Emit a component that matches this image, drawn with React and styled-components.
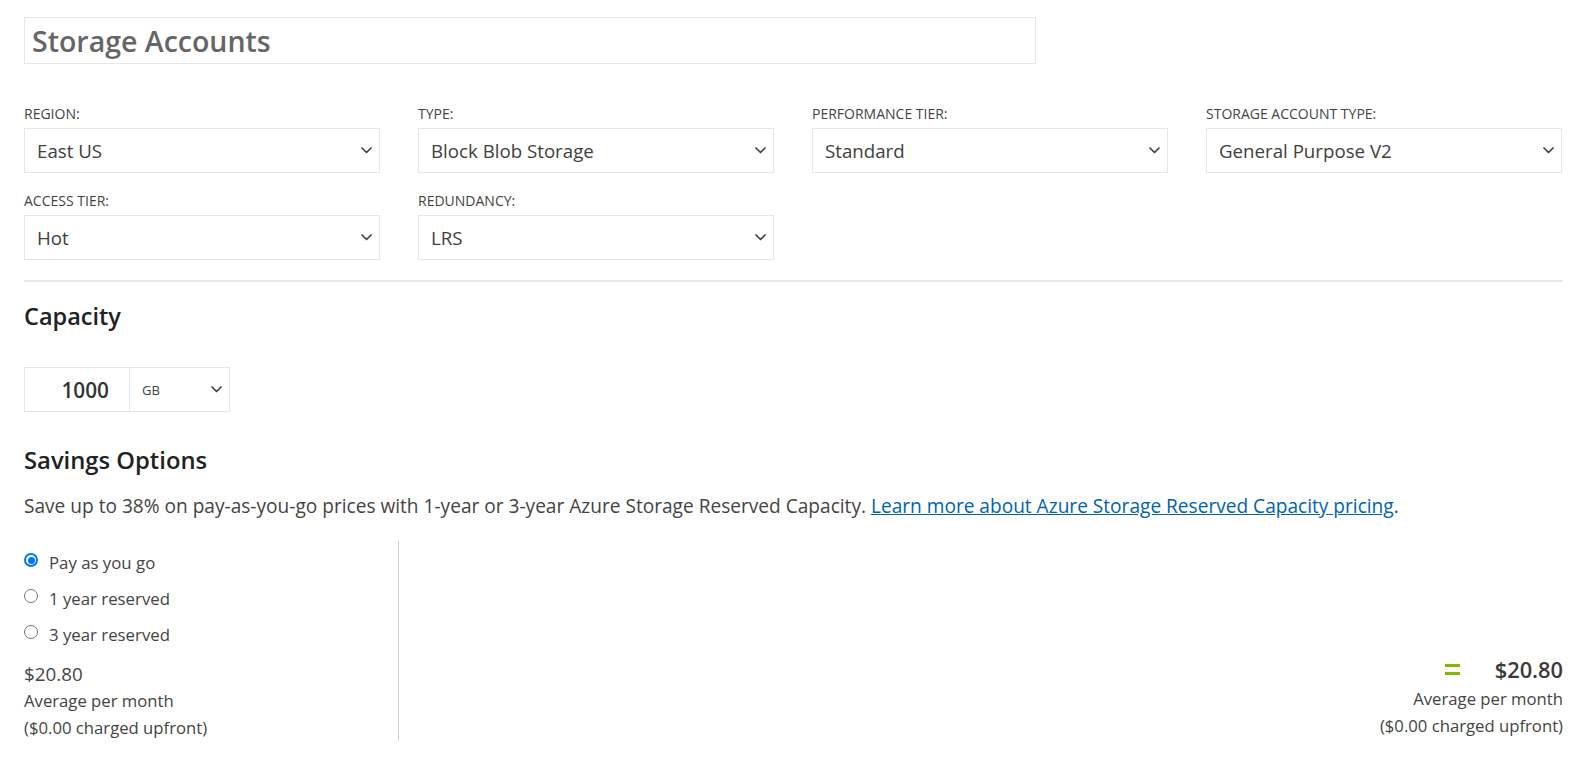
import React from "react";
import styled, { createGlobalStyle } from "styled-components";

const Global = createGlobalStyle`
  html, body { margin: 0; padding: 0; background: #fff; }
  body { font-family: "Open Sans", "Noto Sans", "Liberation Sans", sans-serif; color: #333; }
  * { box-sizing: border-box; }
`;

const Page = styled.div`
  padding: 17px 26px 0 24px;
`;

const TitleBox = styled.div`
  width: 1012px;
  height: 47px;
  border: 1px solid #e6e6e6;
  display: flex;
  align-items: center;
  padding-left: 7px;
  font-size: 28.5px;
  font-weight: 600;
  color: #666;
`;

const Grid = styled.div`
  display: grid;
  grid-template-columns: repeat(4, 356px);
  column-gap: 38px;
  row-gap: 18px;
  margin-top: 40px;
`;

const Field = styled.div`
  display: flex;
  flex-direction: column;
`;

const Label = styled.div`
  font-size: 14px;
  color: #444;
  height: 20px;
  line-height: 20px;
  margin-bottom: 4px;
`;

const SelectBox = styled.div`
  height: 45px;
  width: ${p => (p.$w ? p.$w + "px" : "auto")};
  border: 1px solid #e6e6e6;
  display: flex;
  align-items: center;
  justify-content: space-between;
  padding: 0 7px 0 12px;
  font-size: ${p => p.$fs || 18.7}px;
  color: #404040;
`;

const Chevron = () => (
  <svg width="11" height="7" viewBox="0 0 11 7" fill="none">
    <path d="M1 1 L5.5 5.5 L10 1" stroke="#444" strokeWidth="1.7" strokeLinecap="round" strokeLinejoin="round" />
  </svg>
);

const Divider = styled.div`
  height: 2px;
  background: #e8e8e8;
  margin-top: 20px;
`;

const Heading = styled.h2`
  margin: ${p => p.$mt || 0}px 0 0;
  font-size: ${p => p.$fs || 23.5}px;
  font-weight: 600;
  color: #222;
  line-height: ${p => p.$lh || 30}px;
`;

const CapacityRow = styled.div`
  display: flex;
  margin-top: 36px;
`;

const NumInput = styled.div`
  width: 105px;
  height: 45px;
  border: 1px solid #e6e6e6;
  border-right: none;
  display: flex;
  align-items: center;
  justify-content: flex-end;
  padding-right: 20px;
  font-size: 20.8px;
  font-weight: 600;
  color: #333;
`;

const Para = styled.p`
  margin: 17px 0 0;
  font-size: 19.1px;
  color: #444;
  line-height: 26px;
`;

const Link = styled.a`
  color: #0063b1;
  text-decoration: underline;
`;

const Savings = styled.div`
  display: flex;
  margin-top: 22px;
`;

const LeftCol = styled.div`
  width: 375px;
  border-right: 1px solid #cfcfcf;
  padding-top: 3px;
`;

const RadioRow = styled.label`
  display: flex;
  align-items: center;
  gap: 11px;
  height: 36px;
  font-size: 16.8px;
  color: #444;
`;

const Radio = styled.span`
  width: 14px;
  height: 14px;
  flex: none;
  border-radius: 50%;
  border: ${p => (p.$checked ? "2px solid #0075ff" : "1px solid #767676")};
  display: flex;
  align-items: center;
  justify-content: center;
  margin-top: -4px;
  &::after {
    content: "";
    display: ${p => (p.$checked ? "block" : "none")};
    width: 7px;
    height: 7px;
    border-radius: 50%;
    background: #0075ff;
  }
`;

const Price = styled.div`
  font-size: 18.8px;
  color: #444;
  margin-top: 9px;
  line-height: 26px;
`;

const Small = styled.div`
  font-size: 16.7px;
  color: #444;
  line-height: 27px;
  text-align: ${p => p.$align || "left"};
`;

const RightCol = styled.div`
  flex: 1;
  display: flex;
  flex-direction: column;
  align-items: flex-end;
  justify-content: flex-end;
  padding-bottom: 2px;
`;

const Total = styled.div`
  display: flex;
  align-items: center;
  gap: 35px;
  font-size: 21.8px;
  font-weight: 600;
  color: #3a3a3a;
  line-height: 31px;
`;

const Eq = styled.span`
  width: 15px;
  height: 11px;
  border-top: 3.5px solid #7fba00;
  border-bottom: 3.5px solid #7fba00;
  margin-top: -1px;
`;

const fields = [
  ["REGION:", "East US"],
  ["TYPE:", "Block Blob Storage"],
  ["PERFORMANCE TIER:", "Standard"],
  ["STORAGE ACCOUNT TYPE:", "General Purpose V2"],
  ["ACCESS TIER:", "Hot"],
  ["REDUNDANCY:", "LRS"],
];

export default function App() {
  return (
    <>
      <Global />
      <Page>
        <TitleBox>Storage Accounts</TitleBox>
        <Grid>
          {fields.map(([l, v]) => (
            <Field key={l}>
              <Label>{l}</Label>
              <SelectBox>
                <span>{v}</span>
                <Chevron />
              </SelectBox>
            </Field>
          ))}
        </Grid>
        <Divider />
        <Heading $mt={19}>Capacity</Heading>
        <CapacityRow>
          <NumInput>1000</NumInput>
          <SelectBox $w={101} $fs={13}>
            <span>GB</span>
            <Chevron />
          </SelectBox>
        </CapacityRow>
        <Heading $mt={32} $fs={23.8} $lh={32}>Savings Options</Heading>
        <Para>
          Save up to 38% on pay-as-you-go prices with 1-year or 3-year Azure Storage Reserved Capacity.{" "}
          <Link href="#">Learn more about Azure Storage Reserved Capacity pricing</Link>.
        </Para>
        <Savings>
          <LeftCol>
            <RadioRow><Radio $checked />Pay as you go</RadioRow>
            <RadioRow><Radio />1 year reserved</RadioRow>
            <RadioRow><Radio />3 year reserved</RadioRow>
            <Price>$20.80</Price>
            <Small>Average per month</Small>
            <Small>($0.00 charged upfront)</Small>
          </LeftCol>
          <RightCol>
            <Total><Eq /><span>$20.80</span></Total>
            <Small $align="right">Average per month</Small>
            <Small $align="right">($0.00 charged upfront)</Small>
          </RightCol>
        </Savings>
      </Page>
    </>
  );
}
